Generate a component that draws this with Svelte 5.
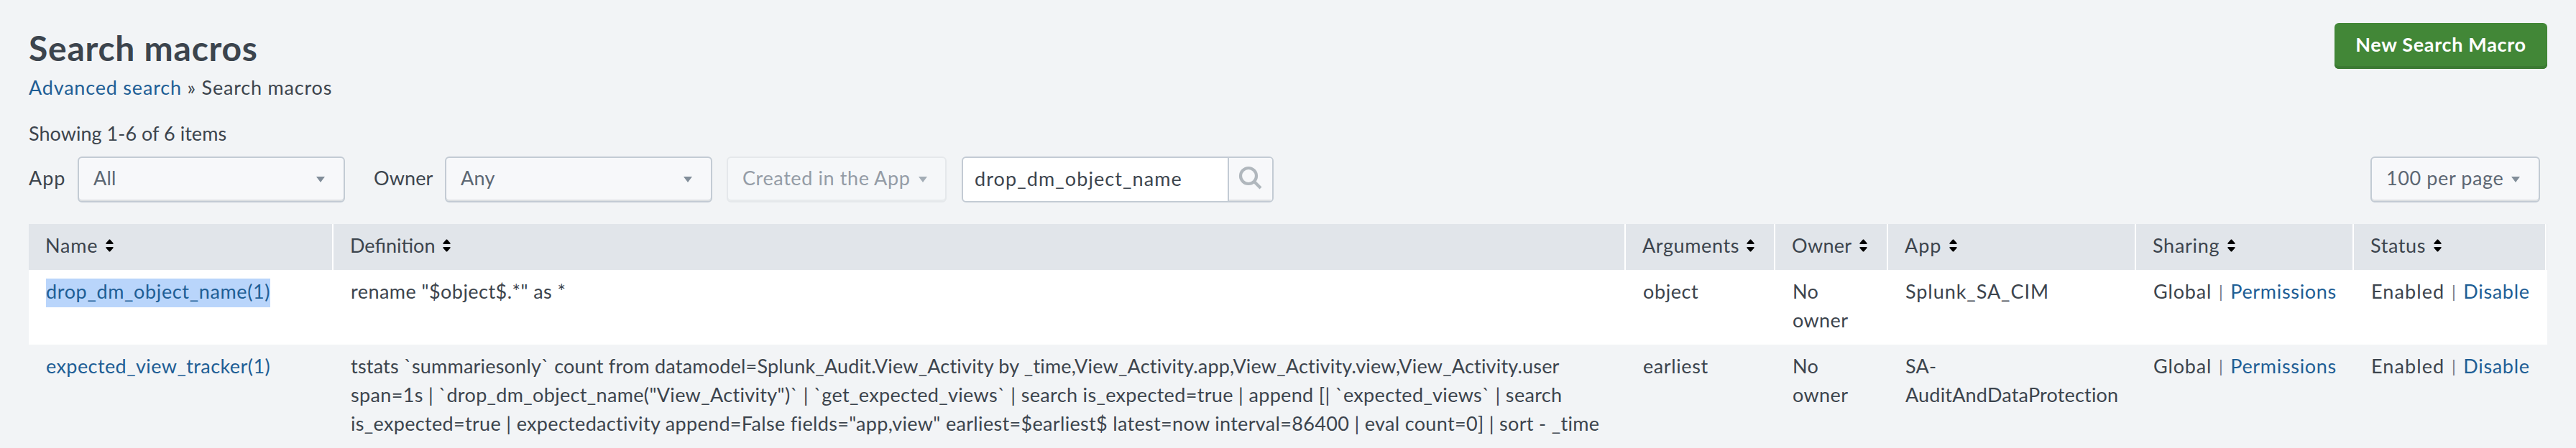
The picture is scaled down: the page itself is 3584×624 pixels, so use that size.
<script>
  // ls is the letter spacing of each label, in px
  const columns = [
    { key: 'name', label: 'Name', width: 424, ls: 0.8 },
    { key: 'definition', label: 'Definition', width: 1798, ls: 0 },
    { key: 'args', label: 'Arguments', width: 208, ls: 0.6 },
    { key: 'owner', label: 'Owner', width: 157, ls: 0.3 },
    { key: 'app', label: 'App', width: 345, ls: 1 },
    { key: 'sharing', label: 'Sharing', width: 303, ls: 0.7 },
    { key: 'status', label: 'Status', width: 268, ls: 0.6 }
  ];

  const macros = [
    {
      name: 'drop_dm_object_name(1)',
      nameLs: 0.64,
      selected: true,
      definition: [{ text: 'rename "$object$.*" as *', ls: 0.45 }],
      args: 'object',
      owner: ['No', 'owner'],
      app: [{ text: 'Splunk_SA_CIM', ls: 0.94 }]
    },
    {
      name: 'expected_view_tracker(1)',
      nameLs: 0.42,
      selected: false,
      definition: [
        { text: 'tstats `summariesonly` count from datamodel=Splunk_Audit.View_Activity by _time,View_Activity.app,View_Activity.view,View_Activity.user', ls: 0.2 },
        { text: 'span=1s | `drop_dm_object_name("View_Activity")` | `get_expected_views` | search is_expected=true | append [| `expected_views` | search', ls: 0.337 },
        { text: 'is_expected=true | expectedactivity append=False fields="app,view" earliest=$earliest$ latest=now interval=86400 | eval count=0] | sort - _time', ls: 0.328 }
      ],
      args: 'earliest',
      owner: ['No', 'owner'],
      app: [{ text: 'SA-', ls: 0.2 }, { text: 'AuditAndDataProtection', ls: 0.18 }]
    }
  ];

  let filter = 'drop_dm_object_name';
</script>

<div class="page">
  <header>
    <div class="heading">
      <h1>Search macros</h1>
      <p class="breadcrumb"><a href="#advanced">Advanced search</a> » Search macros</p>
    </div>
    <button class="primary">New Search Macro</button>
  </header>

  <p class="count">Showing 1-6 of 6 items</p>

  <div class="filters">
    <span class="label app">App</span>
    <button class="control select"><span>All</span><i class="caret"></i></button>
    <span class="label owner">Owner</span>
    <button class="control select"><span>Any</span><i class="caret"></i></button>
    <button class="control created" disabled><span>Created in the App</span><i class="caret"></i></button>
    <div class="search">
      <input type="text" bind:value={filter} spellcheck="false" />
      <button aria-label="Search">
        <svg width="36" height="36" viewBox="0 0 36 36" fill="none" stroke="#b0b7bd" stroke-width="4.2">
          <circle cx="15" cy="15" r="11" />
          <path d="M22.5 22.5L32 32" />
        </svg>
      </button>
    </div>
    <button class="control per-page"><span>100 per page</span><i class="caret"></i></button>
  </div>

  <table>
    <colgroup>
      {#each columns as col}
        <col style="width: {col.width}px" />
      {/each}
      <col />
    </colgroup>
    <thead>
      <tr>
        {#each columns as col}
          <th>
            <span style="letter-spacing: {col.ls}px">{col.label}</span>
            <svg class="sort" width="11" height="18" viewBox="0 0 11 18">
              <path d="M5 0.5H6L10.5 5.5V7H0.5V5.5ZM0.5 11H10.5V12.5L6 17.5H5L0.5 12.5Z" />
            </svg>
          </th>
        {/each}
        <th class="edge"></th>
      </tr>
    </thead>
    <tbody>
      {#each macros as macro}
        <tr>
          <td>
            <a class:selected={macro.selected} style="letter-spacing: {macro.nameLs}px" href="#macro">{macro.name}</a>
          </td>
          <td>
            {#each macro.definition as line}
              <div style="letter-spacing: {line.ls}px">{line.text}</div>
            {/each}
          </td>
          <td>{macro.args}</td>
          <td>
            {#each macro.owner as line}
              <div class="owner-line">{line}</div>
            {/each}
          </td>
          <td>
            {#each macro.app as line}
              <div style="letter-spacing: {line.ls}px">{line.text}</div>
            {/each}
          </td>
          <td class="actions"><span class="global">Global</span><span class="sep">|</span><a href="#permissions">Permissions</a></td>
          <td class="actions"><span class="enabled">Enabled</span><span class="sep">|</span><a href="#disable">Disable</a></td>
          <td class="edge"></td>
        </tr>
      {/each}
    </tbody>
  </table>
</div>

<style>
  :global(body) {
    background: #f2f4f6;
  }

  .page {
    box-sizing: border-box;
    width: 3584px;
    height: 624px;
    padding: 32px 40px 0;
    overflow: hidden;
    background: #f2f4f6;
    color: #3c444d;
    font: 27px/40px Lato, "Open Sans", sans-serif;
    letter-spacing: 0.6px;
  }

  h1,
  p {
    margin: 0;
  }

  a {
    color: #1e5e95;
    text-decoration: none;
  }

  button,
  input {
    box-sizing: border-box;
    margin: 0;
    font: inherit;
  }

  header {
    display: flex;
    justify-content: space-between;
    align-items: flex-start;
  }

  .heading {
    padding-top: 5px;
  }

  h1 {
    font-size: 48px;
    line-height: 60px;
    letter-spacing: 0.75px;
  }

  .breadcrumb {
    margin-top: 5px;
    letter-spacing: 0.8px;
  }

  .primary {
    width: 296px;
    height: 64px;
    padding: 10px 0 14px;
    border: 0;
    border-radius: 6px;
    background: #428737;
    box-shadow: inset 0 -4px 0 #3b7a32;
    color: #fff;
    font-weight: bold;
    letter-spacing: 0.68px;
  }

  .count {
    margin-top: 24px;
    letter-spacing: 0.04px;
  }

  .filters {
    display: flex;
    margin-top: 12px;
  }

  .label {
    padding-top: 10px;
  }

  .label.app {
    width: 68px;
    letter-spacing: 1px;
  }

  .label.owner {
    width: 99px;
    margin-left: 40px;
    letter-spacing: 0.1px;
  }

  .control {
    display: flex;
    justify-content: space-between;
    height: 64px;
    padding: 8px 20px 12px;
    border: 2px solid #c3cbd4;
    border-radius: 6px;
    background: #f7f8fa;
    box-shadow: inset 0 -2px 0 #dcdfe2;
    color: #5c6773;
    text-align: left;
    letter-spacing: 0.6px;
  }

  .select {
    width: 372px;
    padding-right: 26px;
    letter-spacing: 0.25px;
  }

  .created {
    width: 306px;
    margin-left: 20px;
    padding-right: 25px;
    border-color: #e5e8eb;
    background: #f5f7f9;
    box-shadow: inset 0 -2px 0 #e7eaec;
    color: #949ca6;
  }

  .created .caret {
    border-top-color: #a3adb6;
  }

  .per-page {
    width: 236px;
    margin-left: auto;
    margin-right: 10px;
    padding-right: 26px;
  }

  .caret {
    width: 0;
    height: 0;
    margin-top: 18px;
    border: 6px solid transparent;
    border-top: 8px solid #818d99;
    border-bottom: 0;
  }

  .search {
    display: flex;
    width: 434px;
    height: 64px;
    margin-left: 21px;
    border: 2px solid #c3cbd4;
    border-radius: 6px;
    box-sizing: border-box;
    background: #fff;
    overflow: hidden;
  }

  .search input {
    width: 368px;
    height: 60px;
    padding: 0 16px 4px;
    border: 0;
    outline: 0;
    background: none;
    color: #3c444d;
    letter-spacing: 1.1px;
  }

  .search button {
    display: flex;
    flex: 1;
    align-items: flex-start;
    padding: 10px 0 0 12px;
    border: 0;
    border-left: 2px solid #c3cbd4;
    background: #f7f8fa;
    box-shadow: inset 0 -2px 0 #dcdfe2;
  }

  .search svg {
    flex: none;
  }

  table {
    width: 3504px;
    margin-top: 30px;
    border-collapse: separate;
    border-spacing: 0;
    table-layout: fixed;
  }

  th,
  td {
    padding: 10px 0 14px 24px;
    text-align: left;
    vertical-align: top;
    white-space: nowrap;
  }

  th {
    height: 40px;
    padding-left: 23px;
    border-right: 2px solid #fff;
    background: #e1e5ea;
    font-weight: normal;
  }

  th.edge,
  td.edge {
    padding: 0;
    border: 0;
  }

  .sort {
    margin-left: 3px;
    vertical-align: 1px;
  }

  tbody tr:nth-child(odd) {
    background: #fff;
  }

  .selected {
    padding: 1px 0 6px;
    background: #b9d5fb;
  }

  .owner-line {
    letter-spacing: 0.4px;
  }

  .global {
    letter-spacing: 0.84px;
  }

  .enabled {
    letter-spacing: 1.1px;
  }

  .actions a {
    letter-spacing: 0.68px;
  }

  .sep {
    display: inline-block;
    width: 26px;
    color: #6b7785;
    font-size: 23px;
    line-height: 30px;
    text-align: center;
    vertical-align: 1px;
  }
</style>
